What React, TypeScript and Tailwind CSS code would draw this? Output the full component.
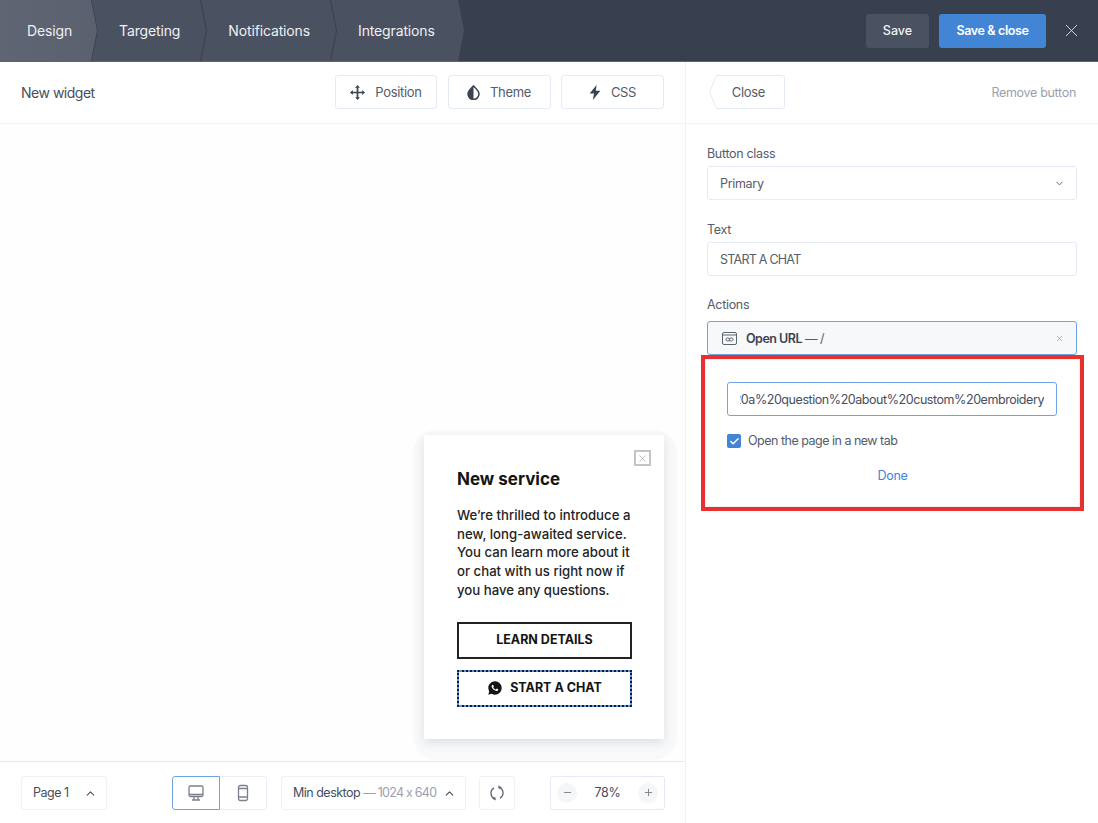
import { ChevronDown, ChevronUp, Minus, Plus, X, Check } from "lucide-react";
import { RiWhatsappFill } from "react-icons/ri";

const font = { fontFamily: "Inter, 'Liberation Sans', sans-serif" };

function Tab({
  label,
  active,
  z,
  pad,
}: {
  label: string;
  active?: boolean;
  z: string;
  pad: string;
}) {
  return (
    <div className={`relative h-full -mr-[6px] ${z}`}>
      <div
        className={`flex h-full items-center pl-[27px] text-[14px] tracking-[-0.01em] text-[#eef0f3] [clip-path:polygon(0_0,calc(100%-6px)_0,100%_50%,calc(100%-6px)_100%,0_100%)] ${pad} ${
          active
            ? "bg-gradient-to-r from-[#5f6572] to-[#5a606e]"
            : "bg-[#4a5160]"
        }`}
      >
        {label}
      </div>
      <svg
        className="absolute right-0 top-0 h-full w-[7px]"
        viewBox="0 0 7 61"
        preserveAspectRatio="none"
        fill="none"
      >
        <path d="M0.5 0 L6.5 30.5 L0.5 61" stroke="#3a4150" strokeWidth="1" />
      </svg>
    </div>
  );
}

function ToolButton({
  icon,
  label,
  className,
}: {
  icon: React.ReactNode;
  label: string;
  className: string;
}) {
  return (
    <button
      className={`flex h-[34px] items-center justify-center gap-[10px] rounded-[3px] border border-[#e4ebf4] bg-white text-[13px] tracking-tight text-[#555c6b] ${className}`}
    >
      {icon}
      <span className="mt-[2px]">{label}</span>
    </button>
  );
}

function FieldLabel({ label }: { label: string }) {
  return (
    <div className="text-[12.5px] leading-[18px] tracking-tight text-[#555c6b]">
      {label}
    </div>
  );
}

function WidgetPreview() {
  return (
    <div className="relative mb-[22px] mr-[21px] h-[304px] w-[240px]">
      <div className="absolute -bottom-[21px] -left-[11px] -right-[13px] -top-[5px] rounded-[24px] bg-[#f8f9fa]" />
      <div className="relative h-full bg-white px-[33px] pt-[33px] shadow-[0_4px_10px_rgba(0,0,0,0.1)]">
        <div className="absolute right-[13px] top-[15px] flex h-[16px] w-[17px] items-center justify-center border-2 border-[#c4c4c4]">
          <X size={11} strokeWidth={1.75} className="text-[#a9a9a9]" />
        </div>
        <div className="text-[17px] font-bold leading-[22px] text-[#141414]">
          New service
        </div>
        <p className="mt-[16px] text-[13.2px] font-medium leading-[18.7px] text-[#232323]">
          We’re thrilled to introduce a new, long-awaited service. You can learn
          more about it or chat with us right now if you have any questions.
        </p>
        <button className="mt-[22px] flex h-[37px] w-[175px] items-center justify-center border-2 border-[#222] text-[12.5px] font-bold text-[#141414]">
          LEARN DETAILS
        </button>
        <button className="mt-[11px] block h-[37px] w-[175px] border-2 border-dotted border-[#0f1d33] bg-[#5a96e3] text-[12.5px] font-bold text-[#141414]">
          <span className="flex h-full w-full items-center justify-center gap-[7px] bg-white">
            <RiWhatsappFill size={16} />
            START A CHAT
          </span>
        </button>
      </div>
    </div>
  );
}

export default function App() {
  return (
    <div
      style={font}
      className="flex h-[823px] w-[1098px] flex-col overflow-hidden bg-white"
    >
      {/* top bar */}
      <header className="flex h-[62px] shrink-0 items-center border-b border-[#5c6371] bg-[#383f4f]">
        <nav className="flex h-full">
          <Tab label="Design" active z="z-40" pad="pr-[26px]" />
          <Tab label="Targeting" z="z-30" pad="pr-[27px]" />
          <Tab label="Notifications" z="z-20" pad="pr-[27px]" />
          <Tab label="Integrations" z="z-10" pad="pr-[30px]" />
        </nav>
        <div className="ml-auto flex items-center">
          <button className="h-[34px] w-[63px] rounded-[3px] bg-[#4a5160] pt-[2px] text-[12.5px] font-medium text-[#f0f1f3]">
            Save
          </button>
          <button className="ml-[10px] h-[34px] w-[107px] rounded-[3px] bg-[#4285d4] pt-[2px] text-[12.5px] font-semibold tracking-[-0.03em] text-white">
            Save &amp; close
          </button>
          <X
            size={21}
            strokeWidth={1}
            className="ml-[15px] mr-[16px] text-[#e5e7eb]"
          />
        </div>
      </header>

      <div className="flex min-h-0 flex-1">
        {/* left */}
        <main className="flex w-[686px] shrink-0 flex-col border-r border-[#eef1f6]">
          <div className="flex h-[62px] shrink-0 items-center border-b border-[#eef0f3] pb-px pl-[21px] pr-[21px]">
            <span className="text-[14px] tracking-[-0.035em] text-[#474e5d]">
              New widget
            </span>
            <div className="ml-auto flex gap-[10.5px]">
              <ToolButton
                className="w-[102px]"
                label="Position"
                icon={
                  <svg width="15" height="15" viewBox="0 0 16 16" fill="#3b4252">
                    <path d="M8 0 10.6 3H8.9V7.1H13V5.4L16 8 13 10.6V8.9H8.9V13H10.6L8 16 5.4 13H7.1V8.9H3V10.6L0 8 3 5.4V7.1H7.1V3H5.4Z" />
                  </svg>
                }
              />
              <ToolButton
                className="w-[103px]"
                label="Theme"
                icon={
                  <svg width="13" height="15" viewBox="0 0 13 15">
                    <path
                      d="M6.5 1C8.5 3.2 12 5.5 12 9a5.5 5.5 0 0 1-11 0C1 5.5 4.5 3.2 6.5 1Z"
                      fill="none"
                      stroke="#3b4252"
                      strokeWidth="1.5"
                    />
                    <path
                      d="M6.5 1C4.5 3.2 1 5.5 1 9a5.5 5.5 0 0 0 5.5 5.5Z"
                      fill="#3b4252"
                    />
                  </svg>
                }
              />
              <ToolButton
                className="w-[103px]"
                label="CSS"
                icon={
                  <svg width="12" height="15" viewBox="0 0 12 15" fill="#3b4252">
                    <path d="M7.6 0 0.6 8.6H5L3.8 15 11.4 5.8H6.8Z" />
                  </svg>
                }
              />
            </div>
          </div>

          <div className="flex min-h-0 flex-1 items-end justify-end bg-[#fefefe]">
            <WidgetPreview />
          </div>

          <div className="flex h-[62px] shrink-0 items-center border-t border-[#e4ebf7] bg-white pl-[21px]">
            <button className="flex h-[34px] w-[86px] items-center justify-between rounded-[3px] border border-[#eef1f6] pl-[11px] pr-[9px] pt-[2px] text-[12.5px] tracking-[-0.04em] text-[#474e5d]">
              Page 1
              <ChevronUp size={13} strokeWidth={2} />
            </button>
            <div className="ml-[65px] flex h-[34px]">
              <div className="flex w-[48px] items-center justify-center rounded-l-[3px] border border-[#6ea3e4]">
                <svg width="18" height="18" viewBox="0 0 18 18" fill="none" stroke="#7a808c" strokeWidth="1.3">
                  <rect x="2" y="2" width="14" height="10.5" rx="1.5" />
                  <path d="M2 10.5H16M7 13V16M11 13V16M5 16H13" />
                </svg>
              </div>
              <div className="flex w-[47px] items-center justify-center rounded-r-[3px] border border-l-0 border-[#eaeff7]">
                <svg width="12" height="18" viewBox="0 0 12 18" fill="none" stroke="#7a808c" strokeWidth="1.3">
                  <rect x="1.5" y="1.5" width="9" height="15" rx="1.8" />
                  <path d="M1.5 4.5H10.5M1.5 13H10.5" />
                </svg>
              </div>
            </div>
            <button className="ml-[14px] flex h-[34px] w-[185px] items-center justify-between whitespace-nowrap rounded-[3px] border border-[#eef1f6] pl-[11px] pr-[9px] pt-[2px] text-[12.5px] tracking-[-0.04em] text-[#474e5d]">
              <span>
                Min desktop{" "}
                <span className="tracking-[-0.06em] text-[#9aa1ae]">
                  — 1024 x 640
                </span>
              </span>
              <ChevronUp size={13} strokeWidth={2} />
            </button>
            <button className="ml-[13px] flex h-[34px] w-[36px] items-center justify-center rounded-[3px] border border-[#eef1f6]">
              <svg width="16" height="16" viewBox="0 0 16 16" fill="none" stroke="#5c6371" strokeWidth="1.3">
                <path d="M5 2.9A6 6 0 0 0 5.6 13.6M11 13.1A6 6 0 0 0 10.4 2.4" />
                <path d="M9.6 0.9 9.9 3.6 12.4 2.6Z M6.4 15.1 6.1 12.4 3.6 13.4Z" fill="#5c6371" strokeWidth="0.6" />
              </svg>
            </button>
            <div className="ml-[35px] flex h-[34px] w-[115px] items-center justify-between rounded-[3px] border border-[#e4ebf7] px-[6px] text-[12.5px] tracking-tight text-[#474e5d]">
              <span className="flex h-[20px] w-[20px] items-center justify-center rounded-full bg-[#f5f6f7]">
                <Minus size={11} className="text-[#7a808c]" />
              </span>
              <span className="mt-[2px]">78%</span>
              <span className="flex h-[20px] w-[20px] items-center justify-center rounded-full bg-[#f5f6f7]">
                <Plus size={11} className="text-[#7a808c]" />
              </span>
            </div>
          </div>
        </main>

        {/* right */}
        <aside className="flex min-w-0 flex-1 flex-col">
          <div className="flex h-[62px] shrink-0 items-center justify-between border-b border-[#eef0f3] pb-px pl-[23px] pr-[22px]">
            <div className="relative flex h-[34px] w-[76px] items-center justify-center pl-[3px] pt-[2px] text-[13px] tracking-tight text-[#555c6b]">
              <svg
                className="absolute inset-0 h-full w-full"
                viewBox="0 0 76 34"
                fill="none"
              >
                <path
                  d="M7.5 .5H73a2.5 2.5 0 0 1 2.5 2.5V31a2.5 2.5 0 0 1-2.5 2.5H7.5L.7 17Z"
                  stroke="#e4ebf4"
                />
              </svg>
              <span className="relative">Close</span>
            </div>
            <span className="mt-[2px] text-[12.5px] tracking-tight text-[#9aa1ae]">
              Remove button
            </span>
          </div>

          <div className="flex flex-col pl-[21px] pr-[21px] pt-[21px]">
            <FieldLabel label="Button class" />
            <div className="mt-[3px] flex h-[34px] items-center justify-between rounded-[3px] border border-[#e4ebf7] pl-[12px] pr-[11px] text-[12.5px] tracking-tight text-[#555c6b]">
              <span className="mt-[2px]">Primary</span>
              <ChevronDown size={11} strokeWidth={2} />
            </div>
            <div className="mt-[21px]">
              <FieldLabel label="Text" />
            </div>
            <div className="mt-[3px] flex h-[34px] items-center rounded-[3px] border border-[#e4ebf7] pl-[12px] pt-[2px] text-[12.5px] tracking-[-0.06em] text-[#555c6b]">
              START A CHAT
            </div>
            <div className="mt-[20px]">
              <FieldLabel label="Actions" />
            </div>
            <div className="mt-[7px] flex h-[34px] items-center rounded-[3px] border border-[#6ea3e4] bg-[#f7f8f9] pl-[14px] pr-[12px] text-[12.5px] tracking-[-0.04em] text-[#3b4252]">
              <svg width="15" height="15" viewBox="0 0 15 15" fill="none" stroke="#5c6371" strokeWidth="1">
                <rect x="0.5" y="1.5" width="14" height="12" rx="1.5" />
                <path d="M0.5 4H14.5" />
                <rect x="4" y="7" width="3.6" height="3" rx="1.5" />
                <rect x="7.4" y="7" width="3.6" height="3" rx="1.5" />
              </svg>
              <span className="ml-[9px] mt-[2px] font-semibold">Open URL</span>
              <span className="ml-[3px] mt-[2px] text-[#555c6b]">— /</span>
              <X size={9} className="ml-auto text-[#9aa1ae]" />
            </div>
            <div className="-ml-[6px] -mr-[7px] h-[156px] border-4 border-[#e8302f] bg-white px-[22px] pt-[23px] shadow-[inset_0_0_0_1px_#eff1f3]">
              <div className="flex h-[34px] w-[330px] items-center rounded-[3px] border border-[#6ea3e4] px-[12px] pt-[2px] text-[12.5px] tracking-[-0.035em] text-[#474e5d]">
                <div className="flex w-full justify-end overflow-hidden">
                  <span className="whitespace-nowrap">
                    %20a%20question%20about%20custom%20embroidery
                  </span>
                </div>
              </div>
              <label className="mt-[16px] flex items-center gap-[7px] text-[12.5px] tracking-[-0.04em] text-[#555c6b]">
                <span className="flex h-[14px] w-[14px] items-center justify-center rounded-[2px] bg-[#4285d4]">
                  <Check size={11} strokeWidth={3} className="text-white" />
                </span>
                Open the page in a new tab
              </label>
              <div className="mt-[16px] text-center text-[12.5px] tracking-tight text-[#4285d4]">
                Done
              </div>
            </div>
          </div>
        </aside>
      </div>
    </div>
  );
}
